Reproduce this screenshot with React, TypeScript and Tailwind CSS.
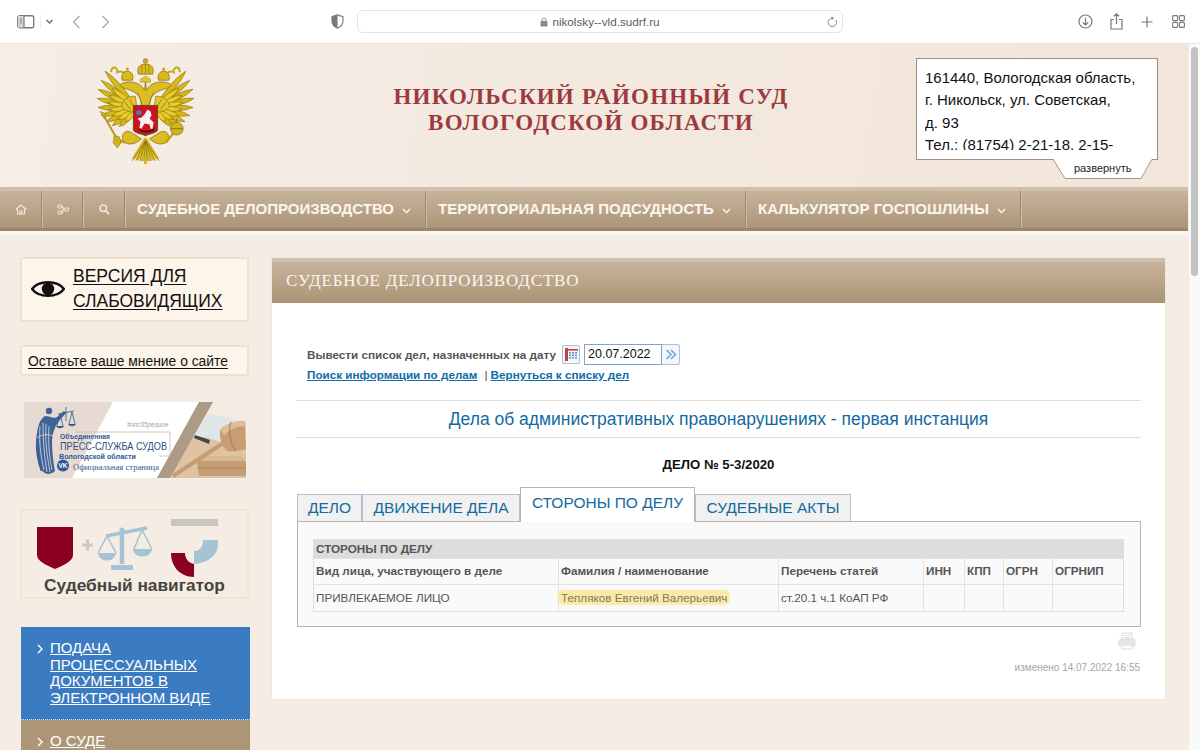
import React from "react";

const sans = "font-['Liberation_Sans',Arial,sans-serif]";

function Feather({ tx, ty, w, fill }: { tx: number; ty: number; w: number; fill: string }) {
  const rx = 40;
  const ry = 50;
  const dx = tx - rx;
  const dy = ty - ry;
  const len = Math.hypot(dx, dy);
  const nx = (-dy / len) * w;
  const ny = (dx / len) * w;
  const mx = rx + dx * 0.68;
  const my = ry + dy * 0.68;
  return (
    <path
      d={`M${rx} ${ry} Q${mx + nx} ${my + ny} ${tx} ${ty} Q${mx - nx} ${my - ny} ${rx} ${ry} Z`}
      fill={fill}
      stroke="#7d6a0e"
      strokeWidth="0.55"
    />
  );
}

function Emblem() {
  const outer: [number, number][] = [
    [8, 13],
    [4, 22],
    [1, 31],
    [0, 40],
    [1, 49],
    [4, 57],
    [9, 63],
    [15, 67],
    [22, 68],
  ];
  const inner: [number, number][] = [
    [15, 30],
    [12, 37],
    [11, 44],
    [12, 51],
    [15, 57],
    [21, 61],
    [28, 63],
  ];
  const wing = (
    <g>
      {outer.map(([x, y]) => (
        <Feather key={`${x}-${y}`} tx={x} ty={y} w={5.5} fill="#d6b618" />
      ))}
      {inner.map(([x, y]) => (
        <Feather key={`${x}-${y}`} tx={x} ty={y} w={5} fill="#e9cc2c" />
      ))}
      <path d="M38 38 C31 37 25 42 24 48 C29 54 36 54 40 53 Z" fill="#e2c527" stroke="#7d6a0e" strokeWidth="0.6" />
      <path d="M28 44 L33 51 M32 41 L37 49" stroke="#8f7a12" strokeWidth="0.8" />
    </g>
  );
  return (
    <svg width="97" height="107" viewBox="0 0 96 106" className="block blur-[0.3px]">
      {wing}
      <g transform="matrix(-1 0 0 1 96 0)">{wing}</g>
      <path d="M14 14 C14 7 21 9 20 14 C26 11 28 18 33 21 M82 14 C82 7 75 9 76 14 C70 11 68 18 63 21" stroke="#c5a818" strokeWidth="2" fill="none" />
      <path d="M41 16 C39 10 42 6 48 6 C54 6 57 10 55 16 Z" fill="#d9b91c" stroke="#7f6a0e" strokeWidth="0.7" />
      <path d="M44.5 7 V15 M51.5 7 V15 M48 6 V16" stroke="#7f6a0e" strokeWidth="0.5" />
      <circle cx="48" cy="3" r="2.4" fill="#c9a917" stroke="#7f6a0e" strokeWidth="0.4" />
      <path d="M25 22 C23 16 27 13 30 13 C33 13 37 16 35 22 Z M61 22 C59 16 63 13 66 13 C69 13 73 16 71 22 Z" fill="#d9b91c" stroke="#7f6a0e" strokeWidth="0.7" />
      <circle cx="30" cy="11" r="1.6" fill="#c9a917" />
      <circle cx="66" cy="11" r="1.6" fill="#c9a917" />
      <path d="M44 47 C44 36 36 33 30 31 C23 29 21 26 25 25 C32 22 44 24 47 32 L48 22 L49 32 C52 24 64 22 71 25 C75 26 73 29 66 31 C60 33 52 36 52 47 Z" fill="#dcbc20" stroke="#7f6a0e" strokeWidth="0.7" />
      <path d="M43 21 L48 18 L53 21 L53 24 L43 24 Z" fill="#e3c526" stroke="#7f6a0e" strokeWidth="0.4" />
      <path d="M40 34 C42 38 43 42 44 46 M56 34 C54 38 53 42 52 46" stroke="#8f7a12" strokeWidth="0.7" fill="none" />
      {Array.from({ length: 7 }, (_, i) => i).map((i) => (
        <path key={i} d={`M48 80 L${36 + i * 4} ${100 + (i === 3 ? 5 : 3 - Math.abs(i - 3))}`} stroke="#d6b71d" strokeWidth="3" />
      ))}
      {Array.from({ length: 8 }, (_, i) => i).map((i) => (
        <path key={i} d={`M48 82 L${34.5 + i * 3.9} 102`} stroke="#7d6a0e" strokeWidth="0.55" />
      ))}
      <path d="M36 75 C28 69 23 76 26 82 C30 87 38 86 44 80 Z M60 75 C68 69 73 76 70 82 C66 87 58 86 52 80 Z" fill="#dcbc20" stroke="#7f6a0e" strokeWidth="0.7" />
      <path d="M28 84 L19 80 M68 84 L76 74" stroke="#bfa118" strokeWidth="2.2" />
      <path d="M6 56 L22 84" stroke="#b99b16" strokeWidth="2" />
      <path d="M3 53 L9 55 L7 60 Z" fill="#cbac1a" stroke="#7f6a0e" strokeWidth="0.4" />
      <path d="M17 77 L22 78 L24 84 L20 89 L16 84 Z" fill="#d1b11c" stroke="#7f6a0e" strokeWidth="0.5" />
      <circle cx="79" cy="70" r="6.3" fill="#d3b41c" stroke="#7f6a0e" strokeWidth="0.7" />
      <path d="M73 70 H85 M79 60 V64" stroke="#8a7410" strokeWidth="1" />
      <path d="M36 47 H60 V71 C60 74 52 75 48 77 C44 75 36 74 36 71 Z" fill="#cb141d" stroke="#5e4a0a" strokeWidth="0.9" />
      <path d="M47 56 L50 51 L53 53 L54 57 L52 60 L56 64 L55 70 L53 70 L52 66 L47 65 L44 70 L42 69 L43 63 L40 60 L44 59 Z" fill="#f6f1ee" />
      <circle cx="41.5" cy="54" r="2.6" fill="#4a78c8" />
      <path d="M41 70 C46 73 52 73 57 69 L56 72 C52 74 46 74 42 72 Z" fill="#2c1a10" />
    </svg>
  );
}

function PressBanner() {
  return (
    <svg width="222" height="76" viewBox="0 0 222 76" className="block">
      <rect width="222" height="76" fill="#e6dad3" />
      <polygon points="89,0 175,0 133,76 48,76" fill="#fff" />
      <polygon points="189,0 222,0 222,76 146,76" fill="#f2ebe2" />
      <polygon points="165,34 222,38 222,76 146,76" fill="#dfc3a3" />
      <polygon points="184,12 222,20 222,36 203,42 172,32" fill="#dfe5e8" />
      <polygon points="171,33 186,38 185,42 170,36" fill="#3f4a52" />
      <polygon points="173,61 180,54 216,54 222,60 222,74 175,74" fill="#c69e75" />
      <polygon points="180,54 216,54 220,59 176,59" fill="#dcb993" />
      <path d="M174 66 H222" stroke="#a97f57" strokeWidth="0.8" />
      <path d="M149 74 L204 38" stroke="#c79c72" strokeWidth="4" />
      <path d="M196 28 C201 22 212 19 221 19 L222 47 C214 49 207 50 203 49 C198 44 195 36 196 28 Z" fill="#c89d72" />
      <path d="M196 28 C200 22 212 19 221 19 L222 24 C212 24 205 28 201 33 Z" fill="#e0bd98" />
      <path d="M207 20 C204 28 206 42 212 49" stroke="#a27a54" strokeWidth="1" fill="none" />
      <polygon points="175,0 189,0 146,76 133,76" fill="#ad9a87" />
      <g fill="#3d659c">
        <circle cx="25" cy="9" r="3.2" />
        <path d="M21 14 C16 17 14 24 13 31 C11 41 12 52 14 60 C15 66 18 71 24 72 C26 72 29 71 31 69 C29 60 28 48 28 38 C29 30 31 24 35 19 L42 11 L40 9 L33 15 C30 17 25 14 21 14 Z" />
      </g>
      <path d="M16 24 C15 36 16 52 20 68 M19 21 C19 36 20 54 23 70 M22 22 C21 38 23 54 26 70 M25 24 C24 38 25 54 28 68 M13 36 C18 32 24 32 30 34" stroke="#e6dad3" strokeWidth="0.8" fill="none" />
      <path d="M13 45 L17 69" stroke="#2f5a92" strokeWidth="1.2" />
      <path d="M42 5 V19 M34 12 L50 9 M36 12 L33 24 M36 12 L39 24 M48 10 L45 22 M48 10 L51 22" stroke="#2f5a92" strokeWidth="0.8" fill="none" />
      <path d="M32 24 C34 27 38 27 40 24 Z M44 22 C46 25 50 25 52 22 Z" fill="#2f5a92" />
      <path d="M52 30 H146 V54 H135" fill="none" stroke="#cdbfb2" strokeWidth="0.9" />
      <text x="103" y="25" fontSize="6.3" fill="#a89f97" fontFamily="Liberation Sans" fontStyle="italic">#опс35регион</text>
      <text x="36" y="36.5" fontSize="7" fill="#2f5a92" fontFamily="Liberation Sans" fontWeight="bold" textLength="50" lengthAdjust="spacingAndGlyphs">Объединенная</text>
      <text x="36" y="47.5" fontSize="11.5" fill="#2c4f82" fontFamily="Liberation Sans" textLength="107" lengthAdjust="spacingAndGlyphs">ПРЕСС-СЛУЖБА СУДОВ</text>
      <text x="35" y="56.5" fontSize="7" fill="#2f5a92" fontFamily="Liberation Sans" fontWeight="bold" textLength="77" lengthAdjust="spacingAndGlyphs">Вологодской области</text>
      <circle cx="39" cy="63.5" r="6" fill="#2c5a96" />
      <text x="39" y="66" fontSize="6.5" fill="#fff" textAnchor="middle" fontFamily="Liberation Sans" fontWeight="bold">VK</text>
      <text x="49" y="68" fontSize="9" fill="#2f5a92" fontFamily="Liberation Serif" textLength="86" lengthAdjust="spacingAndGlyphs">Официальная страница</text>
    </svg>
  );
}

function NavigatorBanner() {
  return (
    <svg width="225" height="86" viewBox="0 0 225 86" className="block">
      <path d="M15 16 H51 V44 C51 50 42 54 33 58 C24 54 15 50 15 44 Z" fill="#8b0020" />
      <path d="M60 34 H71 M65.5 28.5 V39.5" stroke="#cdcac4" strokeWidth="3" />
      <g fill="none" stroke="#a4c3d3">
        <path d="M84 25 L125 17" strokeWidth="3.5" />
        <path d="M100 20 V53" strokeWidth="4.5" />
        <path d="M76 42 L85 25 L94 42 M112 38 L120 19 L130 38" strokeWidth="1.5" />
      </g>
      <g fill="#a4c3d3">
        <path d="M76 42 H94 C93 52 77 52 76 42 Z" />
        <path d="M111 38 H130 C129 48 112 48 111 38 Z" />
        <rect x="89" y="54" width="22" height="5" rx="1" />
        <circle cx="100" cy="19" r="2.5" />
      </g>
      <rect x="149" y="8" width="47" height="7" fill="#c9c5c1" />
      <path d="M196 29 V33 C196 44 186 52 172 53 V40 C178 40 181 36 181 29 Z" fill="#a4c3d3" />
      <path d="M149 42 H163 C163 48 167 52 172 53 V66 C158 66 149 55 149 42 Z" fill="#8b0020" />
      <text x="112.5" y="80" textAnchor="middle" fontSize="17.3" fontWeight="bold" fill="#444" fontFamily="Liberation Sans">Судебный навигатор</text>
    </svg>
  );
}

function Chevron({ className = "" }: { className?: string }) {
  return (
    <svg width="9" height="6" viewBox="0 0 9 6" className={className}>
      <path d="M1 1 L4.5 4.5 L8 1" fill="none" stroke="currentColor" strokeWidth="1.5" />
    </svg>
  );
}

function Toolbar() {
  const c = "#77787a";
  return (
    <div className="flex h-[44px] shrink-0 items-center border-b border-[#e6e3e0] bg-white">
      <svg width="18" height="14" viewBox="0 0 18 14" className="ml-[17px]">
        <rect x="0.75" y="0.75" width="16" height="12" rx="2" fill="none" stroke={c} strokeWidth="1.3" />
        <rect x="1" y="1" width="6" height="11.5" fill="#d5d5d6" />
        <path d="M7 1 V13" stroke={c} strokeWidth="1.2" />
        <path d="M3 4 H5 M3 6 H5 M3 8 H5" stroke={c} strokeWidth="0.9" />
      </svg>
      <div className="ml-[5px] h-[14px] w-px bg-[#eeeeee]" />
      <svg width="9" height="6" viewBox="0 0 9 6" className="ml-[4px] text-[#6c6d6f]">
        <path d="M1.5 1 L4.5 4 L7.5 1" fill="none" stroke="currentColor" strokeWidth="1.4" />
      </svg>
      <svg width="9" height="14" viewBox="0 0 9 14" className="ml-[18px]">
        <path d="M7.5 1 L1.5 7 L7.5 13" fill="none" stroke="#a8a9ab" strokeWidth="1.3" />
      </svg>
      <svg width="9" height="14" viewBox="0 0 9 14" className="ml-[20px]">
        <path d="M1.5 1 L7.5 7 L1.5 13" fill="none" stroke="#a8a9ab" strokeWidth="1.3" />
      </svg>
      <svg width="13" height="15" viewBox="0 0 13 15" className="ml-[221px]">
        <path d="M6.5 0.8 C8.5 2 10.5 2.4 12 2.5 V7 C12 10.5 9.5 13 6.5 14.2 C3.5 13 1 10.5 1 7 V2.5 C2.5 2.4 4.5 2 6.5 0.8 Z" fill="#fff" stroke="#77787a" strokeWidth="1.1" />
        <path d="M6.5 0.8 C4.5 2 2.5 2.4 1 2.5 V7 C1 10.5 3.5 13 6.5 14.2 Z" fill="#77787a" />
      </svg>
      <div className={`relative ml-[13px] flex h-[23px] w-[486px] items-center justify-center rounded-[6px] border border-[#e4e4e4] bg-white text-[11.7px] text-[#5d5e60] ${sans}`}>
        <svg width="8" height="10" viewBox="0 0 8 10" className="mr-[4px]">
          <rect x="0.5" y="4" width="7" height="5.5" rx="1" fill="#88898b" />
          <path d="M2 4 V2.8 C2 0.6 6 0.6 6 2.8 V4" fill="none" stroke="#88898b" strokeWidth="1" />
        </svg>
        <span>nikolsky--vld.sudrf.ru</span>
        <svg width="11" height="12" viewBox="0 0 11 12" className="absolute right-[4px] top-[5px]">
          <path d="M8.8 4 A4.2 4.2 0 1 1 5.5 2.2" fill="none" stroke="#88898b" strokeWidth="1" />
          <path d="M4.6 0.2 L7 2.2 L4.6 4.2 Z" fill="#88898b" />
        </svg>
      </div>
      <svg width="15" height="15" viewBox="0 0 15 15" className="ml-[235px]">
        <circle cx="7.5" cy="7.5" r="6.5" fill="none" stroke={c} strokeWidth="1.2" />
        <path d="M7.5 3.8 V11 M4.8 8.3 L7.5 11 L10.2 8.3" fill="none" stroke={c} strokeWidth="1.2" />
      </svg>
      <svg width="13" height="17" viewBox="0 0 13 17" className="ml-[17px]">
        <path d="M4 6.5 H1 V16 H12 V6.5 H9 M6.5 11 V1 M3.8 3.4 L6.5 0.8 L9.2 3.4" fill="none" stroke={c} strokeWidth="1.2" />
      </svg>
      <svg width="12" height="12" viewBox="0 0 12 12" className="ml-[18px]">
        <path d="M6 0.5 V11.5 M0.5 6 H11.5" stroke={c} strokeWidth="1.2" />
      </svg>
      <svg width="13" height="13" viewBox="0 0 13 13" className="ml-[19px]">
        <g fill="none" stroke={c} strokeWidth="1.1">
          <rect x="0.6" y="0.6" width="5" height="5" rx="1" />
          <rect x="7.4" y="0.6" width="5" height="5" rx="1" />
          <rect x="0.6" y="7.4" width="5" height="5" rx="1" />
          <rect x="7.4" y="7.4" width="5" height="5" rx="1" />
        </g>
      </svg>
    </div>
  );
}

function Header() {
  return (
    <div className="relative flex h-[143px] bg-[linear-gradient(100deg,#f5ede6_0%,#f4e9df_45%,#f2e6da_100%)]">
      <div className="ml-[97px] mt-[14px]">
        <Emblem />
      </div>
      <div className="ml-[197px] mt-[40px] w-[400px] text-center font-['Liberation_Serif',serif] text-[23px] font-bold leading-[26px] tracking-[1.2px] text-[#9b3b3f] whitespace-nowrap">
        <div>НИКОЛЬСКИЙ РАЙОННЫЙ СУД</div>
        <div>ВОЛОГОДСКОЙ ОБЛАСТИ</div>
      </div>
      <div className={`ml-[125px] mt-[14px] h-[102px] w-[242px] overflow-hidden border border-[#a48c86] bg-white pl-[8px] pt-[8px] text-[15px] leading-[22.3px] text-[#111] ${sans}`}>
        <div className="h-[83px] overflow-hidden whitespace-nowrap">
          161440, Вологодская область,
          <br />г. Никольск, ул. Советская,
          <br />д. 93
          <br />Тел.: (81754) 2-21-18. 2-15-
        </div>
      </div>
      <div className={`absolute left-[1053px] top-[115px] h-[20px] w-[100px] ${sans}`}>
        <svg width="100" height="20" viewBox="0 0 100 20" className="absolute left-0 top-0">
          <path d="M0 0 L12 19.5 H88 L99 0" fill="#fff" stroke="#a9958c" strokeWidth="1" />
          <rect x="1.5" y="0" width="97" height="1" fill="#fff" />
        </svg>
        <div className="absolute left-[21px] top-[2px] text-[11px] leading-[14px] text-[#222]">развернуть</div>
      </div>
    </div>
  );
}

function NavSep() {
  return <div className="h-full w-[2px] border-l border-r border-l-[#a08a6f] border-r-[#cdbba6]" />;
}

function IconCell({ children, w }: { children: React.ReactNode; w: string }) {
  return <div className={`flex h-full items-center justify-center ${w}`}>{children}</div>;
}

function NavText({ label, w }: { label: string; w: string }) {
  return (
    <div className={`flex h-full items-center pb-[1px] pl-[11px] text-[15px] font-bold text-[#fbf5ee] ${w} ${sans} whitespace-nowrap`}>
      <span>{label}</span>
      <Chevron className="ml-[8px] mt-[3px] text-[#fbf5ee]" />
    </div>
  );
}

function Nav() {
  const s = "#f1e8de";
  return (
    <div className="h-[44px] w-full shrink-0 border-b-[3px] border-t-[4px] border-b-[#9b8468] border-t-[#cfbfac] bg-[linear-gradient(180deg,#c8b49c_0%,#b8a388_55%,#ab9477_100%)]">
      <div className="flex h-full items-center">
        <IconCell w="w-[41px]">
          <svg width="12" height="11" viewBox="0 0 12 11">
            <path d="M0.8 5.5 L6 1 L11.2 5.5 M2.5 5 V10 H9.5 V5 M5 10 V7 H7 V10" fill="none" stroke={s} strokeWidth="1.1" />
          </svg>
        </IconCell>
        <NavSep />
        <IconCell w="w-[39px]">
          <svg width="12" height="11" viewBox="0 0 12 11">
            <path d="M1 1 H4.5 V4 H1 Z M1 7 H4.5 V10 H1 Z M8 4 H11.5 V7 H8 Z M4.5 2.5 H6 V8.5 H4.5 M6 5.5 H8" fill="none" stroke={s} strokeWidth="1" />
          </svg>
        </IconCell>
        <NavSep />
        <IconCell w="w-[40px]">
          <svg width="11" height="11" viewBox="0 0 11 11">
            <circle cx="4.3" cy="4.3" r="3.2" fill="none" stroke={s} strokeWidth="1.5" />
            <path d="M6.8 6.8 L10.2 10.2" stroke={s} strokeWidth="1.8" />
          </svg>
        </IconCell>
        <NavSep />
        <NavText label="СУДЕБНОЕ ДЕЛОПРОИЗВОДСТВО" w="w-[299px]" />
        <NavSep />
        <NavText label="ТЕРРИТОРИАЛЬНАЯ ПОДСУДНОСТЬ" w="w-[318px]" />
        <NavSep />
        <NavText label="КАЛЬКУЛЯТОР ГОСПОШЛИНЫ" w="w-[273px]" />
        <NavSep />
      </div>
    </div>
  );
}

function Sidebar() {
  return (
    <div className={`ml-[20px] w-[230px] shrink-0 pt-[22px] ${sans}`}>
      <div className="flex h-[65px] w-[229px] items-center rounded-[3px] border-2 border-[#eee0d1] bg-[#fdf4ea] pb-[1px] pl-[9px]">
        <svg width="34" height="22" viewBox="0 0 34 22">
          <path d="M1 11 C8 2 26 2 33 11 C26 20 8 20 1 11 Z" fill="#fdf4ea" stroke="#111" strokeWidth="2.4" />
          <circle cx="17" cy="11" r="6.2" fill="#111" />
        </svg>
        <div className="ml-[8px] text-[17.5px] leading-[25px] text-[#111] underline underline-offset-2 whitespace-nowrap">
          ВЕРСИЯ ДЛЯ
          <br />
          СЛАБОВИДЯЩИХ
        </div>
      </div>
      <div className="mt-[23px] flex h-[31px] w-[229px] items-center rounded-[3px] border-2 border-[#eee0d1] bg-[#fdf4ea] pl-[6px] pt-[1px] text-[13.85px] text-[#111] underline underline-offset-2 whitespace-nowrap">
        Оставьте ваше мнение о сайте
      </div>
      <div className="ml-[4px] mt-[26px]">
        <PressBanner />
      </div>
      <div className="mt-[31px] h-[90px] w-[229px] border-2 border-[#f3e4d6] bg-[#f5ece3]">
        <NavigatorBanner />
      </div>
      <div className="ml-[1px] mt-[28px] w-[229px] border-b border-dotted border-b-[#dfe6ee] bg-[#3a7bc1] pb-[12px] pl-[16px] pt-[13px] text-[#fff]">
        <div className="flex">
          <svg width="6" height="10" viewBox="0 0 6 10" className="mt-[4px] shrink-0">
            <path d="M1 1 L5 5 L1 9" fill="none" stroke="#fff" strokeWidth="1.4" />
          </svg>
          <div className="ml-[7px] text-[15px] leading-[16.7px] underline underline-offset-1 whitespace-nowrap">
            ПОДАЧА
            <br />
            ПРОЦЕССУАЛЬНЫХ
            <br />
            ДОКУМЕНТОВ В
            <br />
            ЭЛЕКТРОННОМ ВИДЕ
          </div>
        </div>
      </div>
      <div className="ml-[1px] flex h-[60px] w-[229px] bg-[#ad9678] pl-[16px] pt-[13px] text-[#fff]">
        <svg width="6" height="10" viewBox="0 0 6 10" className="mt-[4px] shrink-0">
          <path d="M1 1 L5 5 L1 9" fill="none" stroke="#fff" strokeWidth="1.4" />
        </svg>
        <div className="ml-[7px] text-[15px] leading-[16.7px] underline underline-offset-1">О СУДЕ</div>
      </div>
    </div>
  );
}

const cols = [
  "w-[245px] shrink-0",
  "w-[220px] shrink-0",
  "w-[145px] shrink-0",
  "w-[41px] shrink-0",
  "w-[39px] shrink-0",
  "w-[49px] shrink-0",
  "w-[70px] shrink-0",
];

function Tab({ label, w }: { label: string; w: string }) {
  return (
    <div className={`flex h-[27px] items-center justify-center border border-b-0 border-[#b9bcd6] bg-[#f1f1f1] text-[15.5px] text-[#136a9f] ${w} whitespace-nowrap`}>
      {label}
    </div>
  );
}

function CaseBox() {
  const head = ["Вид лица, участвующего в деле", "Фамилия / наименование", "Перечень статей", "ИНН", "КПП", "ОГРН", "ОГРНИП"];
  return (
    <div className="ml-[25px] mt-[14px] w-[844px]">
      <div className="flex h-[34px] items-end">
        <Tab label="ДЕЛО" w="w-[65px]" />
        <Tab label="ДВИЖЕНИЕ ДЕЛА" w="w-[158px]" />
        <div className="relative z-10 -mb-px flex h-[35px] w-[175px] items-start justify-center border border-b-0 border-[#b5b5b5] bg-white pt-[3px] text-[15.5px] text-[#136a9f] whitespace-nowrap">
          СТОРОНЫ ПО ДЕЛУ
        </div>
        <Tab label="СУДЕБНЫЕ АКТЫ" w="w-[156px]" />
      </div>
      <div className="h-[106px] border-[1.5px] border-[#b5b5b5] bg-[#fafafa] pl-[15px] pt-[17px]">
        <div className="w-[811px] border border-[#dedede] text-[11.7px] text-[#555]">
          <div className="flex h-[18px] items-center bg-[#dcdcdc] pl-[2px] font-bold">СТОРОНЫ ПО ДЕЛУ</div>
          <div className="flex h-[26px] border-t border-[#e2e2e2] pb-[1px] font-bold">
            {head.map((h, i) => (
              <div key={h} className={`flex items-center border-r border-[#e2e2e2] pl-[2px] last:border-r-0 ${cols[i]} whitespace-nowrap`}>
                {h}
              </div>
            ))}
          </div>
          <div className="flex h-[27px] border-t border-[#e2e2e2]">
            <div className={`flex items-center border-r border-[#e2e2e2] pb-[1px] pl-[2px] ${cols[0]}`}>ПРИВЛЕКАЕМОЕ ЛИЦО</div>
            <div className={`flex items-center border-r border-[#e2e2e2] pb-[1px] ${cols[1]}`}>
              <span className="rounded-[4px] bg-[#fbe9a8] px-[2px] py-[1px] leading-[11px] text-[#847c60] shadow-[0_0_2px_1px_#fbe9a8] whitespace-nowrap">Тепляков Евгений Валерьевич</span>
            </div>
            <div className={`flex items-center border-r border-[#e2e2e2] pb-[1px] pl-[2px] ${cols[2]}`}>ст.20.1 ч.1 КоАП РФ</div>
            <div className={`border-r border-[#e2e2e2] ${cols[3]}`} />
            <div className={`border-r border-[#e2e2e2] ${cols[4]}`} />
            <div className={`border-r border-[#e2e2e2] ${cols[5]}`} />
            <div className={cols[6]} />
          </div>
        </div>
      </div>
    </div>
  );
}

function Panel() {
  return (
    <div className={`ml-[21px] mt-[22px] h-[443px] w-[895px] shrink-0 border border-[#efe6dc] bg-white ${sans}`}>
      <div className="flex h-[45px] items-center border-t-[4px] border-t-[#cfbfac] bg-[linear-gradient(180deg,#c8b49c_0%,#b8a388_55%,#ab9477_100%)] pb-[4px] pl-[14px] font-['Liberation_Serif',serif] text-[17px] tracking-[0.83px] text-[#fbf5ee]">
        СУДЕБНОЕ ДЕЛОПРОИЗВОДСТВО
      </div>
      <div className="ml-[35px] mt-[41px] flex h-[21px] items-center">
        <span className="w-[249px] shrink-0 text-[11.7px] font-bold text-[#555] whitespace-nowrap">Вывести список дел, назначенных на дату</span>
        <div className="ml-[6px] flex h-[19px] w-[18px] items-center justify-center rounded-[2px] border border-[#a9bfdc] bg-[#f3f6fb]">
          <svg width="13" height="13" viewBox="0 0 13 13">
            <rect x="0" y="0" width="3" height="13" fill="#b8443d" />
            <rect x="0" y="1" width="13" height="1.6" fill="#c5443d" />
            {[4, 6.5, 9].map((y) => [4, 7, 10].map((x) => <rect key={`${x}-${y}`} x={x} y={y} width="2" height="1.6" fill="#6d93c9" />))}
          </svg>
        </div>
        <div className="ml-[4px] flex h-[21px] w-[78px] items-center border border-[#7fa3cf] bg-white pl-[3px] text-[12.5px] text-[#111]">20.07.2022</div>
        <div className="flex h-[21px] w-[18px] items-center justify-center rounded-r-[3px] border border-l-0 border-[#a9bfdc] bg-[#f3f6fb]">
          <svg width="12" height="11" viewBox="0 0 12 11">
            <path d="M1.5 1 L6 5.5 L1.5 10 M6 1 L10.5 5.5 L6 10" fill="none" stroke="#74a6d8" strokeWidth="1.6" />
          </svg>
        </div>
      </div>
      <div className="ml-[35px] mt-[2px] flex h-[15px] items-center text-[11.7px] font-bold text-[#0e6ca8] whitespace-nowrap">
        <span className="underline">Поиск информации по делам</span>
        <span className="ml-[7px] font-normal text-[#444]">|</span>
        <span className="ml-[3px] underline">Вернуться к списку дел</span>
      </div>
      <div className="ml-[24px] mt-[18px] flex h-[38px] w-[845px] items-center justify-center border-y border-[#dddddd] text-[17.5px] text-[#136a9f]">
        Дела об административных правонарушениях - первая инстанция
      </div>
      <div className="ml-[24px] mt-[19px] w-[845px] text-center text-[13.2px] font-bold leading-[16px] text-[#111]">ДЕЛО № 5-3/2020</div>
      <CaseBox />
      <div className="mr-[25px] mt-[5px] flex justify-end pr-[4px]">
        <svg width="18" height="18" viewBox="0 0 18 18">
          <path d="M4 7 V1 H14 V7 M6 3.5 H12 M6 5.5 H12" fill="none" stroke="#dcdcdc" strokeWidth="1" />
          <path d="M1 9 C1 7 3 7 4 7 H14 C15 7 17 7 17 9 V14 H1 Z" fill="#e6e6e6" stroke="#dcdcdc" />
          <rect x="4" y="13" width="10" height="4" fill="#fff" stroke="#dcdcdc" />
        </svg>
      </div>
      <div className="mr-[25px] mt-[11px] text-right text-[10px] leading-[14px] text-[#a6a6a6]">изменено 14.07.2022 16:55</div>
    </div>
  );
}

function Scrollbar() {
  return (
    <div className="flex w-[12px] shrink-0 justify-center border-l border-[#ececec] bg-[#fafafa] pt-[3px]">
      <div className="h-[229px] w-[7px] rounded-full bg-[#c2c2c2]" />
    </div>
  );
}

export default function App() {
  return (
    <div className="flex h-[750px] w-[1200px] flex-col overflow-hidden bg-white">
      <Toolbar />
      <div className="flex min-h-0 flex-1">
        <div className="w-[1188px] shrink-0 overflow-hidden bg-[#f5ece3]">
          <Header />
          <Nav />
          <div className="h-[4px] bg-[#fbf6f0]" />
          <div className="flex">
            <Sidebar />
            <Panel />
          </div>
        </div>
        <Scrollbar />
      </div>
    </div>
  );
}
